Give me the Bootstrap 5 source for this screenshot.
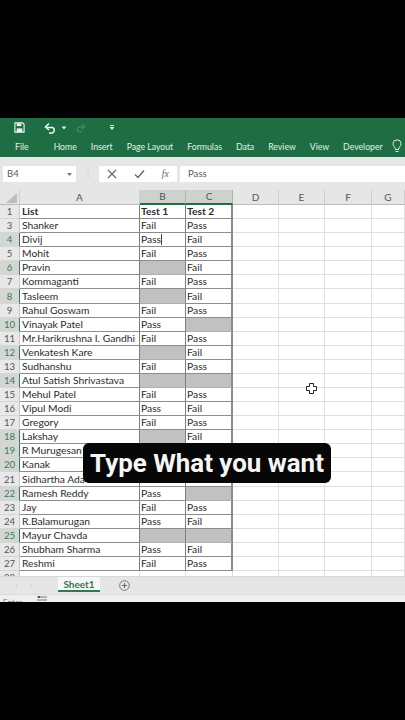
<!DOCTYPE html>
<html lang="en">
<head>
<meta charset="utf-8">
<title>Sheet1 - Excel</title>
<link rel="stylesheet" href="https://cdn.jsdelivr.net/npm/bootstrap@5.3.0/dist/css/bootstrap.min.css">
<style>
html,body{height:720px;background:#000;overflow:hidden}
body{font-family:"Lato","Liberation Sans",sans-serif;color:#333}
.stage{position:relative;width:405px;height:720px;background:#000;padding-top:118px}
.xl{height:484px;background:#e6e6e6;overflow:hidden}
.ribbon{height:39px;background:#1f6e43;color:#e3eee8}
.qat{height:19px;padding-left:14px}
.qat svg{display:block}
.tabs{height:20px;padding-left:15px;gap:14px;font-size:8.7px;white-space:nowrap}
.tabs .file-tab{margin-right:11px}
.bulb{position:absolute;left:392px;top:139px}
.undo-gap{margin-left:19px}
.qat-gap{margin-left:23px}
.fbar{height:33px;background:#e6e6e6;padding:9px 0 8px 3px;font-size:9.6px;color:#5c5c5c}
.namebox{width:73px;background:#fff;padding:0 4px}
.sep{width:23px;color:#bbb;letter-spacing:0}
.btnbox{width:78px;background:#fff;margin-right:3px}
.fx-mark{font-family:"Liberation Serif",serif;color:#666}
.finput{flex:1;background:#fff;padding-left:8px}
.gridwrap{height:386px;overflow:hidden;background:#fff}
.sheet{table-layout:fixed;width:405px;border-collapse:separate;border-spacing:0;font-size:10.3px;color:#2c2c2c}
.sheet td,.sheet th{height:14.08px;line-height:13px;padding:0 0 0 2px;border-right:1px solid #e0e0e0;border-bottom:1px solid #e0e0e0;white-space:nowrap;overflow:hidden;font-weight:400}
.sheet .hd th{height:14px;background:#e6e6e6;color:#555;text-align:center;padding:0;border-right-color:#cfcfcf;border-bottom-color:#bdbdbd;font-size:10px}
.sheet .hd th.picked{background:#ced2ce;border-right-color:#aeb4ae;border-bottom:2px solid #1f6e43}
.sheet .rn{background:#e8e8e8;color:#555;text-align:center;padding:0;border-right-color:#c6c6c6;border-bottom-color:#d6d6d6;font-size:9.6px}
.sheet .rn.on{background:#d3d7d3;color:#3d7a58;border-right:1px solid #3d7a58}
.sheet .ca{border-bottom-color:#8d8d8d;border-right-color:#7e7e7e}
.sheet .cb{border-bottom-color:#8d8d8d;border-right-color:#7e7e7e;padding-left:1px}
.sheet .cc{border-bottom-color:#8d8d8d;border-right:2px solid #8a8a8a;padding-left:1px}
.sheet .blank{background:#c1c1c1;border-bottom-color:#b0b0b0}
.sheet .strong{font-weight:700}
.caret-mark{display:inline-block;width:1px;height:11px;background:#444;vertical-align:-2px}
.sheetbar{height:18px;background:#e6e6e6;font-size:9.6px;border-top:1px solid #d8d8d8}
.arrows{width:58px;padding-left:15px;gap:12px;color:#c4c4c4;font-size:9px}
.sheet-tab{width:42px;height:15px;margin-top:-2px;background:#f7f7f7;color:#2f7a55;font-weight:700;text-align:center;line-height:14px;border-bottom:2px solid #2f7a55;font-size:10px}
.add-gap{margin-left:19px}
.statusbar{height:9px;background:#efefef;font-size:8px;line-height:14px;color:#777;padding-left:3px;overflow:hidden;border-top:1px solid #dcdcdc;gap:15px}
.status-icon{margin-top:1px}
.caption{position:absolute;left:83px;top:443px;width:248px;height:40px;background:#070707;border-radius:6px;color:#f6f6f6;font-family:"Roboto","Liberation Sans",sans-serif;font-weight:700;font-size:25.9px;line-height:40px;text-align:center;white-space:nowrap}
.plus-cursor{position:absolute;left:306px;top:383px}
</style>
</head>
<body>
<div class="stage">
  <div class="xl d-flex flex-column">
    <div class="ribbon flex-shrink-0">
      <div class="qat d-flex align-items-center">
        <svg width="11" height="11" viewBox="0 0 12 12"><path d="M1 1h8.500L11 2.500V11H1z" fill="none" stroke="#eef5f1" stroke-width="1.200"/><rect x="3" y="1.500" width="5" height="3" fill="#eef5f1"/><rect x="3" y="7" width="6" height="4" fill="#eef5f1"/></svg>
        <svg class="undo-gap" width="13" height="12" viewBox="0 0 13 12"><path d="M3 5.500h5.500a3 3 0 0 1 0 5.500H5" fill="none" stroke="#f2f7f4" stroke-width="1.500"/><path d="M5 1.500 1.500 5 5 8" fill="none" stroke="#f2f7f4" stroke-width="1.500"/></svg>
        <svg class="ms-1" width="6" height="4" viewBox="0 0 6 4"><path d="M0.500 0.500h5L3 3.500z" fill="#dfeae4"/></svg>
        <svg class="ms-2" width="11" height="11" viewBox="0 0 13 12"><path d="M10 5.500H4.500a3 3 0 0 0 0 5.500H8M8 1.500 11.500 5 8 8" fill="none" stroke="#3f8a63" stroke-width="1.500"/></svg>
        <svg class="qat-gap" width="6" height="6" viewBox="0 0 6 6"><path d="M1 0h4v1H1zM0.500 2h5L3 5z" fill="#dfeae4"/></svg>
      </div>
      <div class="tabs d-flex align-items-center">
        <span class="file-tab">File</span><span>Home</span><span>Insert</span><span>Page Layout</span><span>Formulas</span><span>Data</span><span>Review</span><span>View</span><span>Developer</span>
      </div>
    </div>
    <div class="fbar d-flex align-items-stretch flex-shrink-0">
      <div class="namebox d-flex justify-content-between align-items-center"><span>B4</span><svg width="5" height="3" viewBox="0 0 5 3"><path d="M0 0h5L2.500 3z" fill="#777"/></svg></div>
      <div class="sep d-flex justify-content-center align-items-center">⋮</div>
      <div class="btnbox d-flex justify-content-around align-items-center">
        <svg width="10" height="10" viewBox="0 0 10 10"><path d="M1 1l8 8M9 1l-8 8" stroke="#666" stroke-width="1.200"/></svg>
        <svg width="11" height="10" viewBox="0 0 11 10"><path d="M1 5.500l3 3 6-7" fill="none" stroke="#666" stroke-width="1.400"/></svg>
        <em class="fx-mark">fx</em>
      </div>
      <div class="finput d-flex align-items-center">Pass</div>
    </div>
    <div class="gridwrap flex-shrink-0">
      <table class="sheet">
        <colgroup><col style="width:20px"><col style="width:120px"><col style="width:46px"><col style="width:47px"><col style="width:46px"><col style="width:46px"><col style="width:47px"><col style="width:33px"></colgroup>
        <tr class="hd"><th><svg class="d-block" width="18" height="13" viewBox="0 0 18 13"><path d="M17 2v10H6z" fill="#bdbdbd"/></svg></th><th>A</th><th class="picked">B</th><th class="picked">C</th><th>D</th><th>E</th><th>F</th><th>G</th></tr>
        <tr><td class="rn">1</td><td class="ca strong">List</td><td class="cb strong">Test 1</td><td class="cc strong">Test 2</td><td></td><td></td><td></td><td></td></tr>
        <tr><td class="rn">3</td><td class="ca">Shanker</td><td class="cb">Fail</td><td class="cc">Pass</td><td></td><td></td><td></td><td></td></tr>
        <tr><td class="rn on">4</td><td class="ca">Divij</td><td class="cb">Pass<span class="caret-mark"></span></td><td class="cc">Fail</td><td></td><td></td><td></td><td></td></tr>
        <tr><td class="rn">5</td><td class="ca">Mohit</td><td class="cb">Fail</td><td class="cc">Pass</td><td></td><td></td><td></td><td></td></tr>
        <tr><td class="rn on">6</td><td class="ca">Pravin</td><td class="cb blank"></td><td class="cc">Fail</td><td></td><td></td><td></td><td></td></tr>
        <tr><td class="rn">7</td><td class="ca">Kommaganti</td><td class="cb">Fail</td><td class="cc">Pass</td><td></td><td></td><td></td><td></td></tr>
        <tr><td class="rn on">8</td><td class="ca">Tasleem</td><td class="cb blank"></td><td class="cc">Fail</td><td></td><td></td><td></td><td></td></tr>
        <tr><td class="rn">9</td><td class="ca">Rahul Goswam</td><td class="cb">Fail</td><td class="cc">Pass</td><td></td><td></td><td></td><td></td></tr>
        <tr><td class="rn on">10</td><td class="ca">Vinayak Patel</td><td class="cb">Pass</td><td class="cc blank"></td><td></td><td></td><td></td><td></td></tr>
        <tr><td class="rn">11</td><td class="ca">Mr.Harikrushna I. Gandhi</td><td class="cb">Fail</td><td class="cc">Pass</td><td></td><td></td><td></td><td></td></tr>
        <tr><td class="rn on">12</td><td class="ca">Venkatesh Kare</td><td class="cb blank"></td><td class="cc">Fail</td><td></td><td></td><td></td><td></td></tr>
        <tr><td class="rn">13</td><td class="ca">Sudhanshu</td><td class="cb">Fail</td><td class="cc">Pass</td><td></td><td></td><td></td><td></td></tr>
        <tr><td class="rn on">14</td><td class="ca">Atul Satish Shrivastava</td><td class="cb blank"></td><td class="cc blank"></td><td></td><td></td><td></td><td></td></tr>
        <tr><td class="rn">15</td><td class="ca">Mehul Patel</td><td class="cb">Fail</td><td class="cc">Pass</td><td></td><td></td><td></td><td></td></tr>
        <tr><td class="rn">16</td><td class="ca">Vipul Modi</td><td class="cb">Pass</td><td class="cc">Fail</td><td></td><td></td><td></td><td></td></tr>
        <tr><td class="rn">17</td><td class="ca">Gregory</td><td class="cb">Fail</td><td class="cc">Pass</td><td></td><td></td><td></td><td></td></tr>
        <tr><td class="rn on">18</td><td class="ca">Lakshay</td><td class="cb blank"></td><td class="cc">Fail</td><td></td><td></td><td></td><td></td></tr>
        <tr><td class="rn on">19</td><td class="ca">R Murugesan</td><td class="cb"></td><td class="cc"></td><td></td><td></td><td></td><td></td></tr>
        <tr><td class="rn on">20</td><td class="ca">Kanak</td><td class="cb"></td><td class="cc"></td><td></td><td></td><td></td><td></td></tr>
        <tr><td class="rn">21</td><td class="ca">Sidhartha Ada</td><td class="cb"></td><td class="cc"></td><td></td><td></td><td></td><td></td></tr>
        <tr><td class="rn on">22</td><td class="ca">Ramesh Reddy</td><td class="cb">Pass</td><td class="cc blank"></td><td></td><td></td><td></td><td></td></tr>
        <tr><td class="rn">23</td><td class="ca">Jay</td><td class="cb">Fail</td><td class="cc">Pass</td><td></td><td></td><td></td><td></td></tr>
        <tr><td class="rn">24</td><td class="ca">R.Balamurugan</td><td class="cb">Pass</td><td class="cc">Fail</td><td></td><td></td><td></td><td></td></tr>
        <tr><td class="rn on">25</td><td class="ca">Mayur Chavda</td><td class="cb blank"></td><td class="cc blank"></td><td></td><td></td><td></td><td></td></tr>
        <tr><td class="rn">26</td><td class="ca">Shubham Sharma</td><td class="cb">Pass</td><td class="cc">Fail</td><td></td><td></td><td></td><td></td></tr>
        <tr><td class="rn">27</td><td class="ca">Reshmi</td><td class="cb">Fail</td><td class="cc">Pass</td><td></td><td></td><td></td><td></td></tr>
        <tr><td class="rn">28</td><td></td><td></td><td></td><td></td><td></td><td></td><td></td></tr>
      </table>
    </div>
    <div class="sheetbar d-flex align-items-center flex-shrink-0">
      <div class="arrows d-flex"><span>‹</span><span>›</span></div>
      <div class="sheet-tab">Sheet1</div>
      <svg class="add-gap" width="11" height="11" viewBox="0 0 11 11"><circle cx="5.500" cy="5.500" r="4.800" fill="none" stroke="#777"/><path d="M5.500 3v5M3 5.500h5" stroke="#666"/></svg>
    </div>
    <div class="statusbar d-flex flex-shrink-0"><span>Enter</span><svg class="status-icon" width="10" height="6" viewBox="0 0 10 6"><path d="M0 1h10M0 4h10" stroke="#777"/><path d="M2 0v2" stroke="#555" stroke-width="2"/></svg></div>
  </div>
  <svg class="bulb" width="10" height="14" viewBox="0 0 10 14"><path d="M3.500 10.500C3.500 8 1 7.500 1 4.800a4 4 0 0 1 8 0c0 2.700-2.500 3.200-2.500 5.700zM3.500 12.500h3" fill="none" stroke="#dfeae4"/></svg>
  <svg class="plus-cursor" width="11" height="11" viewBox="0 0 11 11"><path d="M3.500.5h4v3h3v4h-3v3h-4v-3h-3v-4h3z" fill="#fff" stroke="#222"/></svg>
  <div class="caption">Type What you want</div>
</div>
<script src="https://cdn.jsdelivr.net/npm/bootstrap@5.3.0/dist/js/bootstrap.bundle.min.js"></script>
</body>
</html>
